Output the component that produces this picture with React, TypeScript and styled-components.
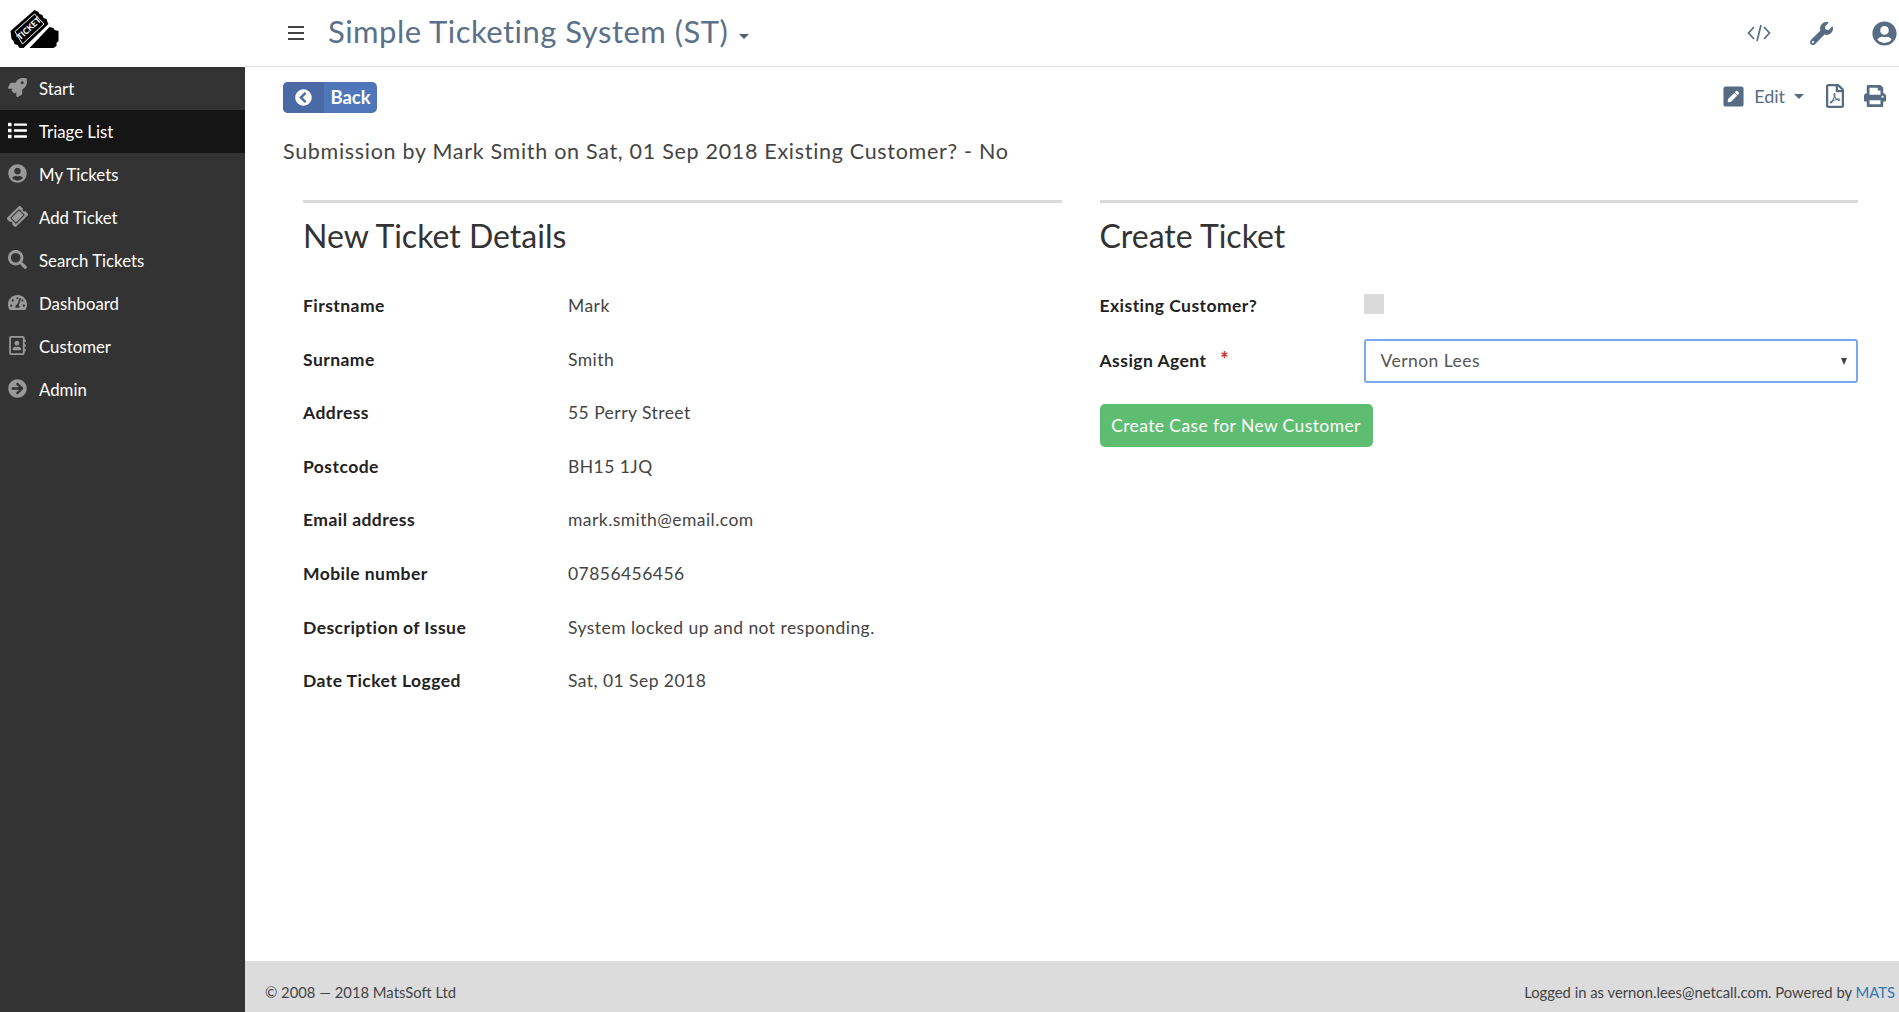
import styled, { createGlobalStyle } from 'styled-components';
import {
  FaRocket, FaList, FaUserCircle, FaTicketAlt, FaSearch, FaTachometerAlt, FaRegAddressBook,
  FaArrowCircleRight, FaChevronCircleLeft, FaWrench, FaPenSquare, FaRegFilePdf, FaPrint,
} from 'react-icons/fa';

const GlobalStyle = createGlobalStyle`
  html, body { margin: 0; padding: 0; height: 100%; background: #fff; }
  body { font-family: Lato, "Open Sans", sans-serif; color: #333; overflow: hidden; }
  * { box-sizing: border-box; }
`;

const Page = styled.div`
  display: grid;
  grid-template-columns: 245px 1fr;
  grid-template-rows: 67px 1fr;
  height: 100vh;
`;

const LogoCell = styled.div`
  padding: 10px 0 0 10px;
`;

const Header = styled.header`
  display: flex;
  align-items: center;
  padding-left: 43px;
  border-bottom: 1px solid #e0e0e0;
`;

const Burger = styled.div`
  width: 16px;
  height: 14px;
  margin-right: 24px;
  display: flex;
  flex-direction: column;
  justify-content: space-between;
  span { height: 2px; background: #444; }
`;

const Title = styled.div`
  font-size: 31px;
  letter-spacing: 0.48px;
  color: #5a7189;
  margin-top: -5px;
`;

const Caret = styled.span<{ $size: number }>`
  display: inline-block;
  border-top: ${(p) => p.$size}px solid currentColor;
  border-left: ${(p) => p.$size}px solid transparent;
  border-right: ${(p) => p.$size}px solid transparent;
`;

const TitleCaret = styled(Caret)`
  margin-left: 11px;
  margin-top: 6px;
  color: #4d5f73;
`;

const HeaderIcons = styled.div`
  margin-left: auto;
  display: flex;
  align-items: center;
  gap: 39px;
  color: #566c82;
  font-size: 23px;
  margin-right: 2px;
  svg { display: block; }
`;

const Sidebar = styled.nav`
  background: #333;
`;

const NavItem = styled.div<{ $active?: boolean }>`
  height: 43px;
  display: flex;
  align-items: center;
  padding-left: 8px;
  color: #fff;
  font-size: 16.8px;
  background: ${(p) => (p.$active ? '#151515' : 'transparent')};
  svg {
    width: 19px;
    height: 19px;
    margin-right: 12px;
    color: ${(p) => (p.$active ? '#fff' : '#999')};
    margin-top: -3px;
  }
`;

const TicketGlyph = styled(FaTicketAlt)`
  transform: rotate(-45deg);
`;

const Main = styled.main`
  display: flex;
  flex-direction: column;
  min-height: 0;
`;

const Content = styled.div`
  flex: 1;
  padding: 15px 13px 0 38px;
`;

const TopRow = styled.div`
  display: flex;
  justify-content: space-between;
  align-items: flex-start;
`;

const BackButton = styled.button`
  display: flex;
  align-items: stretch;
  width: 94px;
  height: 31px;
  padding: 0;
  border: 0;
  border-radius: 5px;
  overflow: hidden;
  background: #4f76b8;
  color: #fff;
  font: 700 18.5px Lato, sans-serif;
`;

const BackIcon = styled.span`
  width: 41px;
  background: #496aa5;
  display: flex;
  align-items: center;
  justify-content: center;
  font-size: 17px;
`;

const BackLabel = styled.span`
  flex: 1;
  line-height: 31px;
  text-align: center;
`;

const Tools = styled.div`
  display: flex;
  align-items: center;
  color: #566c82;
  margin-top: 2px;
  svg { display: block; }
`;

const EditLabel = styled.span`
  display: flex;
  align-items: center;
  font-size: 18px;
  margin: 0 19px 0 9px;
  gap: 9px;
`;

const ToolGap = styled.span`
  width: 17px;
`;

const Summary = styled.p`
  margin: 24px 0 0;
  font-size: 21.5px;
  line-height: 28px;
  letter-spacing: 0.7px;
  color: #444;
`;

const Columns = styled.div`
  display: grid;
  grid-template-columns: 1fr 1fr;
  column-gap: 38px;
  padding: 35px 0 0 20px;
  margin-right: 28px;
`;

const Panel = styled.section`
  border-top: 3px solid #dadada;
`;

const PanelTitle = styled.h2`
  margin: 13px 0 38px;
  font-size: 32px;
  line-height: 40px;
  font-weight: 400;
  color: #333;
`;

const Row = styled.div`
  display: grid;
  grid-template-columns: 265px 1fr;
  height: 53.6px;
  font-size: 17.5px;
  line-height: 24px;
  letter-spacing: 0.45px;
`;

const Label = styled.div`
  font-weight: 700;
  color: #222;
`;

const Value = styled.div`
  color: #444;
`;

const Required = styled.span`
  color: #c7302b;
  margin-left: 9px;
  font-size: 20px;
  line-height: 1;
`;

const Checkbox = styled.span`
  display: block;
  width: 20px;
  height: 20px;
  background: #dadada;
`;

const FormRow = styled(Row)<{ $h: number }>`
  grid-template-columns: 264px 1fr;
  height: ${(p) => p.$h}px;
  align-items: start;
`;

const SelectBox = styled.div`
  height: 44px;
  margin-top: -10px;
  display: flex;
  align-items: center;
  justify-content: space-between;
  padding: 0 9px 0 15px;
  border: 2px solid #7aa7ef;
  border-radius: 3px;
  color: #555;
`;

const SelectCaret = styled(Caret)`
  border-top-width: 7px;
  color: #444;
`;

const SubmitButton = styled.button`
  width: 273px;
  height: 43px;
  border: 0;
  border-radius: 5px;
  background: #5fbd72;
  color: #fff;
  font: 400 17.5px Lato, sans-serif;
  letter-spacing: 0.4px;
`;

const Footer = styled.footer`
  height: 51px;
  display: flex;
  align-items: center;
  justify-content: space-between;
  padding: 10px 4px 0 20px;
  background: #dcdcdc;
  font-size: 14.8px;
  color: #444;
  a { color: #2f78b5; text-decoration: none; }
`;

function Logo() {
  return (
    <svg width="50" height="41" viewBox="0 0 49 41">
      <path d="M19 38 L39 17 L43 18 L44 20 L48 21 L48 31 L46 33 L46 36 L43 38 Z" fill="#000" />
      <path d="M0 21 L24 0 L28 2 L29 4 L32 5 L33 8 L36 9 L37 12 L38 14 L13 38 L9 38 L7 35 L4 34 L3 31 L1 29 Z" fill="#000" />
      <path d="M4.5 21.5 L24 4 L33.5 14 L12 34 Z" fill="none" stroke="#fff" strokeWidth="1" />
      <text transform="translate(19 19) rotate(-43)" textAnchor="middle" dominantBaseline="middle" fontSize="8.5" fontWeight="900" fill="#fff" fontFamily="Lato, sans-serif">TICKET</text>
    </svg>
  );
}

function CodeIcon() {
  return (
    <svg width="24" height="20" viewBox="0 0 24 20" fill="none" stroke="currentColor" strokeWidth="1.7">
      <path d="M7 4 L1.5 10 L7 16" />
      <path d="M17 4 L22.5 10 L17 16" />
      <path d="M14 2 L10 18" />
    </svg>
  );
}

const navItems = [
  { label: 'Start', icon: <FaRocket /> },
  { label: 'Triage List', icon: <FaList />, active: true },
  { label: 'My Tickets', icon: <FaUserCircle /> },
  { label: 'Add Ticket', icon: <TicketGlyph /> },
  { label: 'Search Tickets', icon: <FaSearch /> },
  { label: 'Dashboard', icon: <FaTachometerAlt /> },
  { label: 'Customer', icon: <FaRegAddressBook /> },
  { label: 'Admin', icon: <FaArrowCircleRight /> },
];

const details = [
  ['Firstname', 'Mark'],
  ['Surname', 'Smith'],
  ['Address', '55 Perry Street'],
  ['Postcode', 'BH15 1JQ'],
  ['Email address', 'mark.smith@email.com'],
  ['Mobile number', '07856456456'],
  ['Description of Issue', 'System locked up and not responding.'],
  ['Date Ticket Logged', 'Sat, 01 Sep 2018'],
];

export default function App() {
  return (
    <>
      <GlobalStyle />
      <Page>
        <LogoCell><Logo /></LogoCell>
        <Header>
          <Burger><span /><span /><span /></Burger>
          <Title>Simple Ticketing System (ST)</Title>
          <TitleCaret $size={5} />
          <HeaderIcons>
            <CodeIcon />
            <FaWrench />
            <FaUserCircle size={25} />
          </HeaderIcons>
        </Header>
        <Sidebar>
          {navItems.map((item) => (
            <NavItem key={item.label} $active={item.active}>
              {item.icon}
              {item.label}
            </NavItem>
          ))}
        </Sidebar>
        <Main>
          <Content>
            <TopRow>
              <BackButton type="button">
                <BackIcon><FaChevronCircleLeft /></BackIcon>
                <BackLabel>Back</BackLabel>
              </BackButton>
              <Tools>
                <FaPenSquare size={23} />
                <EditLabel>Edit <Caret $size={5} /></EditLabel>
                <FaRegFilePdf size={24} />
                <ToolGap />
                <FaPrint size={22} />
              </Tools>
            </TopRow>
            <Summary>Submission by Mark Smith on Sat, 01 Sep 2018 Existing Customer? - No</Summary>
            <Columns>
              <Panel>
                <PanelTitle>New Ticket Details</PanelTitle>
                {details.map(([label, value]) => (
                  <Row key={label}>
                    <Label>{label}</Label>
                    <Value>{value}</Value>
                  </Row>
                ))}
              </Panel>
              <Panel>
                <PanelTitle>Create Ticket</PanelTitle>
                <FormRow $h={55}>
                  <Label>Existing Customer?</Label>
                  <Checkbox />
                </FormRow>
                <FormRow $h={55}>
                  <Label>Assign Agent <Required>*</Required></Label>
                  <SelectBox>Vernon Lees <SelectCaret $size={3} /></SelectBox>
                </FormRow>
                <SubmitButton type="button">Create Case for New Customer</SubmitButton>
              </Panel>
            </Columns>
          </Content>
          <Footer>
            <span>© 2008 — 2018 MatsSoft Ltd</span>
            <span>Logged in as vernon.lees@netcall.com. Powered by <a href="#mats">MATS</a></span>
          </Footer>
        </Main>
      </Page>
    </>
  );
}
